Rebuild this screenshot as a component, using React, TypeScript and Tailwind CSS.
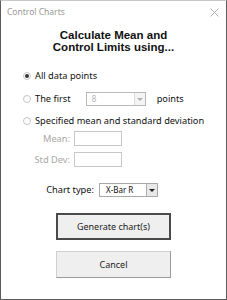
import React from 'react';

function Radio({ checked }: { checked?: boolean }) {
    return (
        <span className="flex h-[8px] w-[8px] items-center justify-center rounded-full border border-[#c4c4c4] bg-white">
            {checked && <span className="h-[4px] w-[4px] rounded-full bg-[#333]" />}
        </span>
    );
}

function Arrow({ dim }: { dim?: boolean }) {
    return (
        <span className={`flex h-full w-[11px] items-center justify-center border-l ${dim ? 'border-[#dcdcdc] bg-[#f4f4f4]' : 'border-[#b0b0b0] bg-[#e8e8e8]'}`}>
            <span className={`h-0 w-0 border-x-[3px] border-t-[3px] border-x-transparent ${dim ? 'border-t-[#b0b0b0]' : 'border-t-[#222]'}`} />
        </span>
    );
}

export default function App() {
    return (
        <div
            className="flex h-[300px] w-[227px] flex-col border border-[#5b5b5b] border-t-[#c8c8c8] bg-white text-[#111]"
            style={{ fontFamily: '"Noto Sans", "Open Sans", sans-serif' }}
        >
            <div className="flex h-[22px] items-center justify-between pl-[6px] pr-[6px]">
                <span className="text-[8.5px] text-[#999]">Control Charts</span>
                <svg width="9" height="9" viewBox="0 0 9 9" className="mr-[1px]">
                    <path d="M0.5 0.5 L8.5 8.5 M8.5 0.5 L0.5 8.5" stroke="#a8a8a8" strokeWidth="0.9" />
                </svg>
            </div>

            <div
                className="mt-[6px] text-center text-[11.5px] font-bold leading-[12px]"
                style={{ fontFamily: '"Liberation Sans", Arial, sans-serif' }}
            >
                <div>Calculate Mean and</div>
                <div>Control Limits using...</div>
            </div>

            <div className="mt-[16px] flex flex-col pl-[22px] text-[9.25px]">
                <div className="flex h-[14px] items-center gap-[4px]">
                    <Radio checked />
                    <span>All data points</span>
                </div>
                <div className="mt-[9px] flex h-[14px] items-center">
                    <Radio />
                    <span className="ml-[4px]">The first</span>
                    <span className="ml-[15px] flex h-[14px] w-[60px] items-center border border-[#b8b8b8] bg-white">
                        <span className="flex-1 pl-[5px] text-[8px] text-[#b0b0b0]">8</span>
                        <Arrow dim />
                    </span>
                    <span className="ml-[11px]">points</span>
                </div>
                <div className="mt-[8px] flex h-[14px] items-center gap-[4px]">
                    <Radio />
                    <span>Specified mean and standard deviation</span>
                </div>
            </div>

            <div className="mt-[3px] flex flex-col gap-[6px] text-[9.25px] text-[#a8a8a8]">
                <div className="flex items-center">
                    <span className="w-[73px] pr-[4px] text-right">Mean:</span>
                    <span className="h-[15px] w-[48px] border border-[#c8c8c8] bg-white" />
                </div>
                <div className="flex items-center">
                    <span className="w-[73px] pr-[4px] text-right">Std Dev:</span>
                    <span className="h-[15px] w-[48px] border border-[#c8c8c8] bg-white" />
                </div>
            </div>

            <div className="mt-[16px] flex items-center text-[9.25px]">
                <span className="w-[98px] pr-[5px] text-right">Chart type:</span>
                <span className="flex h-[14px] w-[59px] items-center border border-[#a8a8a8] bg-white">
                    <span className="flex-1 pl-[6px] text-[8px]">X-Bar R</span>
                    <Arrow />
                </span>
            </div>

            <div className="mt-[16px] flex flex-col items-center gap-[11px] text-[9px]">
                <button className="h-[27px] w-[115px] border-2 border-[#4a4a4a] bg-[#efefef] text-[#222]">
                    Generate chart(s)
                </button>
                <button className="h-[27px] w-[115px] border border-[#cfcfcf] border-b-[#9a9a9a] border-r-[#9a9a9a] bg-[#efefef] text-[#222]">
                    Cancel
                </button>
            </div>
        </div>
    );
}
